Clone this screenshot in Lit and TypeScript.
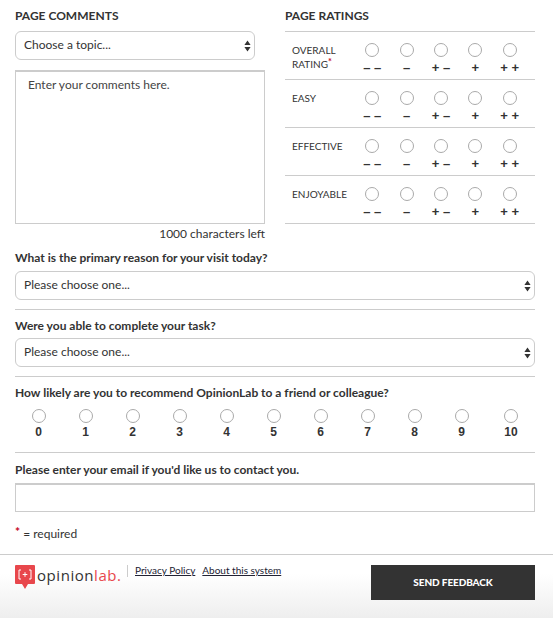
import { LitElement, html, css } from "lit";
import { customElement } from "lit/decorators.js";

const arrows = html`<svg class="arrows" width="7" height="12" viewBox="0 0 7 12"><path d="M3.5 0.5 L6.6 5 H0.4 Z M3.5 11.5 L6.6 7 H0.4 Z" fill="#333"/></svg>`;

const picker = (text: string) => html`<div class="picker">
  <select><option>${text}</option></select>${arrows}
</div>`;

const symbols = ["– –", "–", "+ –", "+", "+ +"];

@customElement("app-root")
export class AppRoot extends LitElement {
  static styles = css`
    :host {
      display: block;
      width: 553px;
      height: 618px;
      overflow: hidden;
      font-family: "Lato", "Liberation Sans", sans-serif;
      font-size: 12px;
      color: #333;
      background: #fff;
    }
    * { box-sizing: border-box; }
    .main { padding: 7px 18px 0 15px; height: 554px; }
    .cols { display: grid; grid-template-columns: 250px 250px; column-gap: 20px; }
    h2 {
      margin: 0;
      font-size: 12px;
      line-height: 17px;
      font-weight: 700;
      color: #333;
    }
    .topic { width: 240px; margin-top: 7px; }
    .picker { display: grid; align-items: center; height: 29px; }
    .picker select, .picker .arrows { grid-area: 1 / 1; }
    .picker select {
      appearance: none;
      width: 100%;
      height: 100%;
      padding: 0 8px 2px;
      border: 1px solid #ccc;
      border-radius: 6px;
      background: #fff;
      font: inherit;
      font-size: 12px;
      color: #333;
    }
    .arrows { justify-self: end; margin-right: 4px; pointer-events: none; }
    textarea {
      display: block;
      width: 250px;
      height: 154px;
      margin-top: 10px;
      padding: 5px 12px;
      border: 1px solid #ccc;
      border-top: 2px solid #ccc;
      border-radius: 0;
      resize: none;
      font: inherit;
      font-size: 12px;
      line-height: 15px;
      outline: none;
    }
    textarea::placeholder { color: #444; opacity: 1; }
    .count { text-align: right; line-height: 17px; margin-top: 1px; }
    .ratings-head { padding-bottom: 7px; border-bottom: 1px solid #ccc; }
    .rating {
      display: grid;
      grid-template-columns: 70px 180px;
      height: 48px;
      border-bottom: 1px solid #ccc;
    }
    .rating .name {
      padding: 11px 0 0 7px;
      font-size: 10px;
      line-height: 14px;
      color: #333;
    }
    .rating sup, .req {
      color: #c8102e;
      font-weight: 900;
    }
    .rating sup { font-size: 9px; line-height: 0; vertical-align: 3px; }
    .opts { display: grid; grid-template-columns: repeat(5, 34.4px); padding-top: 11px; }
    .opt { display: flex; flex-direction: column; align-items: center; }
    .radio {
      appearance: none;
      width: 14px;
      height: 14px;
      margin: 0;
      border: 1px solid #aaa;
      border-radius: 50%;
      background: #fff;
    }
    .sym {
      margin-top: 3px;
      font-family: "Liberation Sans", sans-serif;
      font-size: 13px;
      line-height: 15px;
      font-weight: 700;
      color: #333;
      white-space: pre;
    }
    .q { line-height: 17px; font-weight: 700; font-size: 12px; color: #333; }
    .q1 { margin-top: 7px; }
    .q1 + .picker { margin-top: 5px; }
    .q2 + .picker { margin-top: 4px; }
    hr { border: 0; border-top: 1px solid #ccc; margin: 0; }
    .hr1 { margin-top: 9px; }
    .q2 { margin-top: 7px; }
    .q3 { margin-top: 8px; }
    .scale {
      display: grid;
      grid-template-columns: repeat(10, 47px) 52px;
      margin-top: 8px;
    }
    .scale .n {
      margin-top: 1px;
      font-family: "Liberation Sans", sans-serif;
      font-size: 12px;
      line-height: 16px;
      font-weight: 700;
      color: #333;
    }
    .hr3 { margin-top: 12px; }
    .email {
      display: block;
      width: 100%;
      height: 29px;
      margin-top: 5px;
      border: 1px solid #ccc;
      border-top: 2px solid #ccc;
      border-radius: 0;
      background: #fff;
    }
    .required { margin-top: 13px; line-height: 17px; color: #333; }
    .required .req { font-size: 12px; vertical-align: 2px; line-height: 0; }
    footer {
      height: 64px;
      border-top: 1px solid #ccc;
      padding: 10px 18px 0 15px;
      display: flex;
      align-items: flex-start;
      background: linear-gradient(#fff 30%, #eee);
    }
    .logo { display: flex; align-items: flex-start; gap: 2px; width: 105px; }
    .logo svg { flex: none; }
    .word {
      font-family: "Open Sans", sans-serif;
      font-size: 15px;
      font-weight: 400;
      line-height: 20px;
      letter-spacing: 0.55px;
      color: #333;
      white-space: nowrap;
    }
    .word span { color: #e8474c; }
    .links {
      display: flex;
      gap: 7px;
      margin-left: 7px;
      padding-left: 7px;
      border-left: 1px solid #ccc;
      height: 12px;
      align-items: flex-start;
    }
    .links a {
      margin-top: -1px;
      font-size: 10px;
      line-height: 13px;
      color: #223;
      text-decoration: underline;
      white-space: nowrap;
    }
    .send {
      margin-left: auto;
      width: 164px;
      height: 35px;
      border: 0;
      background: #333;
      color: #fff;
      font: inherit;
      font-size: 10px;
      font-weight: 900;
      letter-spacing: -0.1px;
      padding: 0 0 2px;
    }
  `;

  private rating(name: unknown) {
    return html`<div class="rating">
      <div class="name">${name}</div>
      <div class="opts">
        ${symbols.map(s => html`<div class="opt"><input class="radio" type="radio" /><span class="sym">${s}</span></div>`)}
      </div>
    </div>`;
  }

  render() {
    return html`
      <div class="main">
        <div class="cols">
          <div>
            <h2>PAGE COMMENTS</h2>
            <div class="topic">${picker("Choose a topic...")}</div>
            <textarea placeholder="Enter your comments here."></textarea>
            <div class="count">1000 characters left</div>
          </div>
          <div>
            <h2 class="ratings-head">PAGE RATINGS</h2>
            ${this.rating(html`OVERALL<br />RATING<sup>*</sup>`)}
            ${this.rating("EASY")}
            ${this.rating("EFFECTIVE")}
            ${this.rating("ENJOYABLE")}
          </div>
        </div>
        <div>
          <div class="q q1">What is the primary reason for your visit today?</div>
          ${picker("Please choose one...")}
          <hr class="hr1" />
          <div class="q q2">Were you able to complete your task?</div>
          ${picker("Please choose one...")}
          <hr class="hr1" />
          <div class="q q2 sc">How likely are you to recommend OpinionLab to a friend or colleague?</div>
          <div class="scale">
            ${[0, 1, 2, 3, 4, 5, 6, 7, 8, 9, 10].map(n => html`<div class="opt"><input class="radio" type="radio" /><span class="n">${n}</span></div>`)}
          </div>
          <hr class="hr3" />
          <div class="q q3">Please enter your email if you'd like us to contact you.</div>
          <input class="email" type="text" />
          <div class="required"><span class="req">*</span> = required</div>
        </div>
      </div>
      <footer>
        <div class="logo">
          <svg width="20" height="24" viewBox="0 0 20 24">
            <path d="M1 0 H19 a1 1 0 0 1 1 1 V18 a1 1 0 0 1 -1 1 H13 L10 24 L7 19 H1 a1 1 0 0 1 -1 -1 V1 a1 1 0 0 1 1 -1 Z" fill="#e8474c"/>
            <path d="M6 5 H4 V14 H6 M14 5 H16 V14 H14 M10 7.2 V11.8 M7.7 9.5 H12.3" fill="none" stroke="#fff" stroke-width="1"/>
          </svg>
          <div class="word">opinion<span>lab.</span></div>
        </div>
        <div class="links"><a href="#">Privacy Policy</a><a href="#">About this system</a></div>
        <button class="send">SEND FEEDBACK</button>
      </footer>
    `;
  }
}
